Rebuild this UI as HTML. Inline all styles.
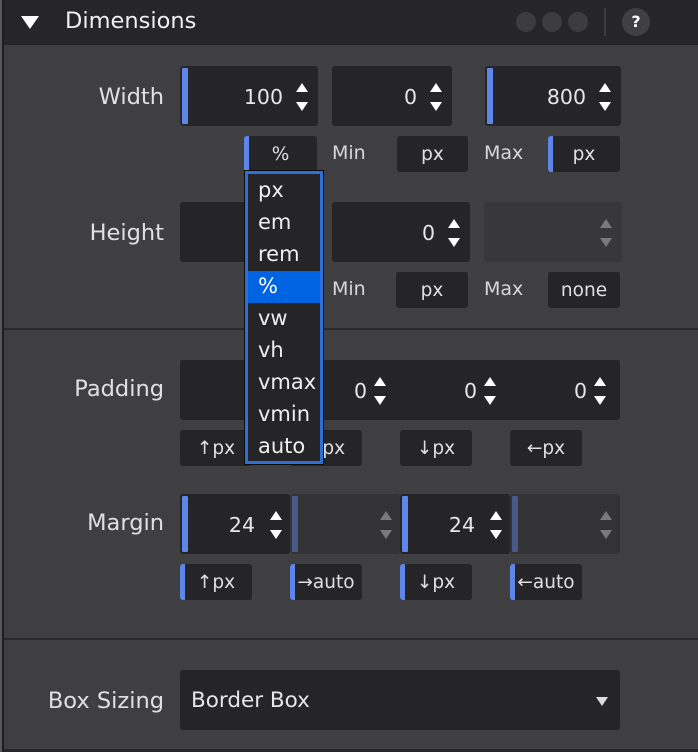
<!DOCTYPE html>
<html><head><meta charset="utf-8"><style>
*{box-sizing:border-box;margin:0;padding:0}
body{width:698px;height:752px;background:#3f3f42;position:relative;overflow:hidden;font-family:"DejaVu Sans","Liberation Sans",sans-serif;color:#e6e6e6}
.a{position:absolute}
.box{position:absolute;background:#252527;border-radius:3px}
.dis{background:#38383b}
.bar{position:absolute;left:2px;top:2px;bottom:2px;width:6px;background:#5e86e8;border-radius:1px}
.bar2{position:absolute;left:0;top:0;bottom:0;width:5px;background:#5e86e8;border-radius:3px 0 0 3px}
.v{position:absolute;top:0;height:60px;line-height:62px;font-size:20.5px;text-align:right}
.up,.dn{position:absolute;width:0;height:0;border-left:6px solid transparent;border-right:6px solid transparent}
.up{border-bottom:9px solid #fff}
.dn{border-top:9px solid #fff}
.g.up{border-bottom-color:#7a7a7d}.g.dn{border-top-color:#7a7a7d}
.u{position:absolute;background:#252527;border-radius:3px;height:36px;line-height:38px;font-size:18.5px;text-align:center;color:#e0e0e0}
.lbl{position:absolute;font-size:22.5px;color:#e0e0e0;text-align:right;width:160px;left:4px}
.sm{position:absolute;font-size:19px;color:#d8d8d8}
.sep{position:absolute;left:4px;right:0;height:2px;background:#2a2a2c}
</style></head><body>
<div class="a" style="left:0;top:0;width:2px;height:752px;background:#58585b"></div>
<div class="a" style="left:2px;top:0;width:2px;height:752px;background:#1e1e20"></div>
<div class="a" style="left:4px;top:0;right:0;height:45px;background:#262628"></div>
<div class="a" style="left:21px;top:16px;width:0;height:0;border-left:9px solid transparent;border-right:9px solid transparent;border-top:13px solid #fff"></div>
<div class="a" style="left:65px;top:8px;font-size:22.5px;color:#f0f0f0">Dimensions</div>
<div class="a" style="left:516px;top:12px;width:20px;height:20px;border-radius:50%;background:#3c3c3e"></div>
<div class="a" style="left:542px;top:12px;width:20px;height:20px;border-radius:50%;background:#3c3c3e"></div>
<div class="a" style="left:568px;top:12px;width:20px;height:20px;border-radius:50%;background:#3c3c3e"></div>
<div class="a" style="left:604px;top:8px;width:2px;height:28px;background:#3c3c3e"></div>
<div class="a" style="left:622px;top:8px;width:28px;height:28px;border-radius:50%;background:#404043;color:#fff;font-weight:bold;font-size:16px;text-align:center;line-height:28px">?</div>

<div class="lbl" style="top:84px">Width</div>
<div class="box" style="left:180px;top:66px;width:138px;height:60px"><div class="bar"></div><div class="v" style="right:35px">100</div><div class="up" style="right:10px;top:17px"></div><div class="dn" style="right:10px;top:36px"></div></div>
<div class="box" style="left:332px;top:66px;width:120px;height:60px"><div class="v" style="right:35px">0</div><div class="up" style="right:10px;top:17px"></div><div class="dn" style="right:10px;top:36px"></div></div>
<div class="box" style="left:485px;top:66px;width:136px;height:60px"><div class="bar"></div><div class="v" style="right:35px">800</div><div class="up" style="right:10px;top:17px"></div><div class="dn" style="right:10px;top:36px"></div></div>
<div class="u" style="left:244px;top:136px;width:73px"><div class="bar2"></div>%</div>
<div class="sm" style="left:332px;top:142px">Min</div>
<div class="u" style="left:397px;top:136px;width:71px">px</div>
<div class="sm" style="left:484px;top:142px">Max</div>
<div class="u" style="left:548px;top:136px;width:72px"><div class="bar2"></div>px</div>

<div class="lbl" style="top:220px">Height</div>
<div class="box" style="left:180px;top:202px;width:138px;height:60px"></div>
<div class="box" style="left:332px;top:202px;width:138px;height:60px"><div class="v" style="right:35px">0</div><div class="up" style="right:10px;top:17px"></div><div class="dn" style="right:10px;top:36px"></div></div>
<div class="box dis" style="left:484px;top:202px;width:138px;height:60px"><div class="up g" style="right:10px;top:17px"></div><div class="dn g" style="right:10px;top:36px"></div></div>
<div class="sm" style="left:332px;top:278px">Min</div>
<div class="u" style="left:396px;top:272px;width:72px">px</div>
<div class="sm" style="left:484px;top:278px">Max</div>
<div class="u" style="left:548px;top:272px;width:72px">none</div>

<div class="sep" style="top:328px"></div>

<div class="lbl" style="top:376px">Padding</div>
<div class="box" style="left:180px;top:360px;width:440px;height:60px">
<div class="v" style="right:253px">0</div><div class="up" style="right:234px;top:17px"></div><div class="dn" style="right:234px;top:36px"></div>
<div class="v" style="right:143px">0</div><div class="up" style="right:124px;top:17px"></div><div class="dn" style="right:124px;top:36px"></div>
<div class="v" style="right:33px">0</div><div class="up" style="right:14px;top:17px"></div><div class="dn" style="right:14px;top:36px"></div>
</div>
<div class="u" style="left:180px;top:430px;width:72px">↑px</div>
<div class="u" style="left:290px;top:430px;width:72px">→px</div>
<div class="u" style="left:400px;top:430px;width:72px">↓px</div>
<div class="u" style="left:510px;top:430px;width:72px">←px</div>

<div class="lbl" style="top:510px">Margin</div>
<div class="box" style="left:180px;top:494px;width:110px;height:60px"><div class="bar"></div><div class="v" style="right:35px">24</div><div class="up" style="right:8px;top:17px"></div><div class="dn" style="right:8px;top:36px"></div></div>
<div class="box dis" style="left:290px;top:494px;width:110px;height:60px;background:#333336"><div class="bar" style="background:#4a5a88;left:2px"></div><div class="up g" style="right:8px;top:17px"></div><div class="dn g" style="right:8px;top:36px"></div></div>
<div class="box" style="left:400px;top:494px;width:110px;height:60px"><div class="bar"></div><div class="v" style="right:35px">24</div><div class="up" style="right:8px;top:17px"></div><div class="dn" style="right:8px;top:36px"></div></div>
<div class="box dis" style="left:510px;top:494px;width:110px;height:60px;background:#333336"><div class="bar" style="background:#4a5a88;left:2px"></div><div class="up g" style="right:8px;top:17px"></div><div class="dn g" style="right:8px;top:36px"></div></div>
<div class="u" style="left:180px;top:564px;width:72px"><div class="bar2"></div>↑px</div>
<div class="u" style="left:290px;top:564px;width:72px"><div class="bar2"></div>→auto</div>
<div class="u" style="left:400px;top:564px;width:72px"><div class="bar2"></div>↓px</div>
<div class="u" style="left:510px;top:564px;width:72px"><div class="bar2"></div>←auto</div>

<div class="sep" style="top:638px"></div>

<div class="lbl" style="top:688px">Box Sizing</div>
<div class="box" style="left:180px;top:670px;width:440px;height:60px"><div class="a" style="left:11px;top:0;line-height:62px;font-size:21.5px">Border Box</div><div class="dn" style="right:12px;top:27px;border-top-color:#ddd"></div></div>
<div class="a" style="left:4px;right:0;top:749px;height:3px;background:#262628"></div>

<div class="a" style="left:244px;top:170px;width:80px;height:295px;background:#0b0b0d;padding:1px">
<div style="width:78px;height:293px;border:3px solid #2f6fd8;background:#252527;position:relative">
<div class="a" style="left:0;right:0;top:97px;height:32px;background:#0063e1"></div>
<div class="a" style="left:10px;top:0px;font-size:21px;line-height:32px;color:#eee">px<br>em<br>rem<br><span style="color:#fff">%</span><br>vw<br>vh<br>vmax<br>vmin<br>auto</div>
</div></div>
</body></html>
